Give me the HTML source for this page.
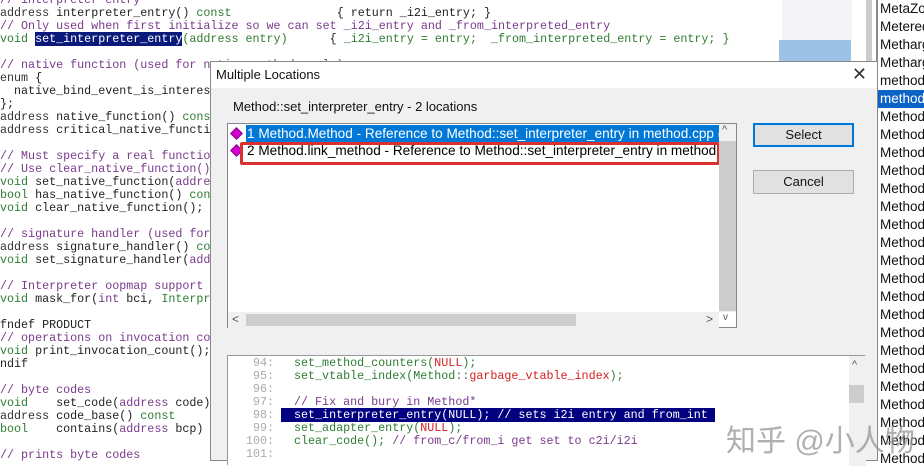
<!DOCTYPE html>
<html><head><meta charset="utf-8"><style>
*{margin:0;padding:0;box-sizing:border-box}
body{width:924px;height:454px;overflow:hidden;background:#fff;position:relative;font-family:"Liberation Sans",sans-serif}
.code{position:absolute;left:0;top:-6px;font-family:"Liberation Mono",monospace;font-size:11.7px;line-height:13px;white-space:pre;color:#222}
.c{color:#7a3a8c}.g{color:#2f7d32}.k{color:#333}.sel{background:#0a1a7a;color:#fff}
.dlg{position:absolute;left:210px;top:61px;width:668px;height:400px;background:#f0f0f0;border:1px solid #888}
.title{position:absolute;left:0;top:0;width:100%;height:26px;background:#fff;font-size:13px;padding:5px 0 0 5px;color:#111}
.x{position:absolute;right:10px;top:2px;font-size:18px;color:#333}
.lbl{position:absolute;left:22px;top:37px;font-size:13px;color:#111}
.list{position:absolute;left:16px;top:61px;width:510px;height:205px;background:#fff;border:1px solid #828790}
.row{position:absolute;left:18px;height:17px;font-size:13.6px;line-height:17px;white-space:nowrap;overflow:hidden;width:473px}
.dia{position:absolute;left:4px;width:9px;height:9px;background:#d400d4;transform:rotate(45deg);border:1px solid #800080}
.btn{position:absolute;left:542px;width:101px;height:24px;background:#e1e1e1;border:1px solid #adadad;font-size:13px;text-align:center;line-height:22px;color:#111}
.prev{position:absolute;left:16px;top:293px;width:638px;height:110px;background:#fff;border-top:1px solid #999;border-left:1px solid #999;font-family:"Liberation Mono",monospace;font-size:11.7px;line-height:13px;white-space:pre}
.ln{position:absolute;left:0;width:46px;text-align:right;color:#aaa}
.r{color:#d32020}
.right{position:absolute;left:876px;top:0;width:48px;height:454px;background:#fff;border-left:2px solid #888}
.it{height:18px;font-size:13.5px;line-height:18px;padding-left:2px;color:#111;white-space:nowrap;overflow:hidden}
</style></head><body>
<div class="code"><span class="c">// interpreter entry</span>
<span class="k">address</span> interpreter_entry() <span class="g">const</span>               { return _i2i_entry; }
<span class="c">// Only used when first initialize so we can set _i2i_entry and _from_interpreted_entry</span>
<span class="g">void</span> <span class="sel">set_interpreter_entry</span><span class="g">(address entry)</span>      { <span class="g">_i2i_entry = entry;  _from_interpreted_entry = entry; }</span>

<span class="c">// native function (used for native methods only)</span>
<span class="k">enum</span> {
  native_bind_event_is_interesting
};
<span class="k">address</span> native_function() <span class="g">const</span>
<span class="k">address</span> critical_native_function

<span class="c">// Must specify a real function</span>
<span class="c">// Use clear_native_function()</span>
<span class="g">void</span> set_native_function(<span class="c">address</span>
<span class="g">bool</span> has_native_function() <span class="g">const</span>
<span class="g">void</span> clear_native_function();

<span class="c">// signature handler (used for</span>
<span class="k">address</span> signature_handler() <span class="g">co</span>
<span class="g">void</span> set_signature_handler(<span class="c">add</span>

<span class="c">// Interpreter oopmap support</span>
<span class="g">void</span> mask_for(<span class="c">int</span> bci, <span class="g">Interpr</span>

fndef PRODUCT
<span class="c">// operations on invocation co</span>
<span class="g">void</span> print_invocation_count();
ndif

<span class="c">// byte codes</span>
<span class="g">void</span>    set_code(<span class="c">address</span> code)
<span class="k">address</span> code_base() <span class="g">const</span>
<span class="g">bool</span>    contains(<span class="c">address</span> bcp)

<span class="c">// prints byte codes</span></div>
<div style="position:absolute;left:782px;top:0;width:70px;height:42px;background:#f4f4f8"></div>
<div style="position:absolute;left:779px;top:40px;width:72px;height:22px;background:#9cc3e6"></div>
<div style="position:absolute;left:866px;top:0;width:6px;height:62px;background:#ccc"></div>
<div class="right">
<div class="it">MetaZone</div><div class="it">Metered</div><div class="it">Metharg</div><div class="it">Metharg</div><div class="it">method</div><div class="it" style="background:#0a64c8;color:#fff">method</div>
<div class="it">Method</div><div class="it">Method</div><div class="it">Method</div><div class="it">Method</div><div class="it">Method</div><div class="it">Method</div><div class="it">Method</div><div class="it">Method</div><div class="it">Method</div><div class="it">Method</div><div class="it">Method</div><div class="it">Method</div><div class="it">Method</div><div class="it">Method</div><div class="it">Method</div><div class="it">Method</div><div class="it">Method</div><div class="it">Method</div><div class="it">Method</div><div class="it">Method</div>
</div>
<div class="dlg">
<div class="title">Multiple Locations<span class="x">✕</span></div>
<div class="lbl">Method::set_interpreter_entry - 2 locations</div>
<div class="list">
<div class="dia" style="top:5px"></div>
<div class="row" style="top:1px;background:#0078d7;color:#fff;padding-left:1px">1 Method.Method - Reference to Method::set_interpreter_entry in method.cpp (hotspot)</div>
<div class="dia" style="top:22px"></div>
<div class="row" style="top:18px;padding-left:1px">2 Method.link_method - Reference to Method::set_interpreter_entry in method.cpp</div>
<div style="position:absolute;left:12px;top:18px;width:480px;height:23px;border:3px solid #d93030;border-radius:2px"></div>
<div style="position:absolute;left:491px;top:0;width:17px;height:188px;background:#f0f0f0"></div>
<div style="position:absolute;left:491px;top:17px;width:17px;height:170px;background:#cdcdcd"></div>
<div style="position:absolute;left:494px;top:0;font-size:11px;color:#555">^</div>
<div style="position:absolute;left:0;top:188px;width:491px;height:16px;background:#f0f0f0"></div>
<div style="position:absolute;left:18px;top:190px;width:330px;height:12px;background:#cdcdcd"></div>
<div style="position:absolute;left:4px;top:188px;font-size:12px;color:#555">&lt;</div>
<div style="position:absolute;left:478px;top:188px;font-size:12px;color:#555">&gt;</div>
<div style="position:absolute;left:495px;top:188px;font-size:10px;color:#555">v</div>
</div>
<div class="btn" style="top:61px;border:2px solid #0078d7;line-height:20px">Select</div>
<div class="btn" style="top:108px">Cancel</div>
<div class="prev">
<div class="ln" style="top:1px">94:</div><div class="ln" style="top:14px">95:</div><div class="ln" style="top:27px">96:</div><div class="ln" style="top:40px">97:</div><div class="ln" style="top:53px">98:</div><div class="ln" style="top:66px">99:</div><div class="ln" style="top:79px">100:</div><div class="ln" style="top:92px">101:</div>
<div style="position:absolute;left:53px;top:52px;width:434px;height:14px;background:#000080"></div>
<div style="position:absolute;left:66px;top:1px;color:#2f7d32">set_method_counters(<span class="r">NULL</span>);
set_vtable_index(Method::<span class="r">garbage_vtable_index</span>);

<span class="c">// Fix and bury in Method*</span>
<span style="color:#fff">set_interpreter_entry(NULL); // sets i2i entry and from_int</span>
set_adapter_entry(<span class="r">NULL</span>);
clear_code(); <span class="c">// from_c/from_i get set to c2i/i2i</span></div>
<div style="position:absolute;left:621px;top:0;width:17px;height:110px;background:#f0f0f0"></div>
<div style="position:absolute;left:621px;top:29px;width:15px;height:18px;background:#cdcdcd"></div>
<div style="position:absolute;left:624px;top:3px;font-size:11px;color:#555;font-family:'Liberation Sans'">^</div>
</div>
</div>
<div style="position:absolute;left:726px;top:416px;font-size:30px;color:rgba(150,150,150,0.75);font-family:'Liberation Sans','Noto Sans CJK SC',sans-serif;white-space:nowrap">知乎 @小人物</div>
</body></html>
